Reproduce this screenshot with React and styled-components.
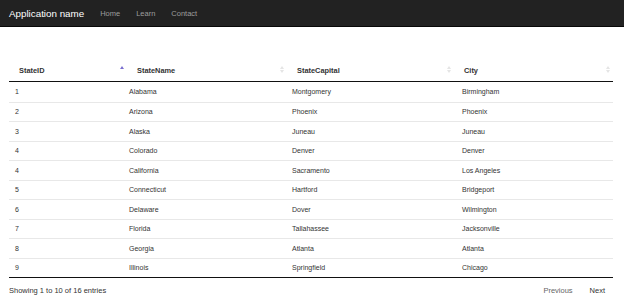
import React from "react";
import styled, { createGlobalStyle } from "styled-components";

const Global = createGlobalStyle`
  html, body { margin: 0; padding: 0; background: #fff; }
  body { font-family: "Liberation Sans", Arial, sans-serif; color: #333; }
`;

const Navbar = styled.nav`
  height: 27px;
  background: #222;
  border-bottom: 1px solid #080808;
  box-sizing: border-box;
  display: flex;
  align-items: center;
  padding-left: 9px;
  padding-top: 1px;
`;

const Brand = styled.span`
  color: #fff;
  font-size: 9.8px;
  margin-right: 16px;
`;

const NavLink = styled.span`
  color: #9d9d9d;
  font-size: 7.5px;
  margin-right: 16px;
`;

const Container = styled.div`
  padding: 32px 11px 0 9px;
`;

const HeadGrid = styled.div`
  display: grid;
  grid-template-columns: 118px 160px 167px 159px;
  border-bottom: 1px solid #111;
`;

const BodyGrid = styled.div`
  display: grid;
  grid-template-columns: 114px 163px 170px 157px;
  border-bottom: 1px solid #111;
`;

const HeadCell = styled.div`
  position: relative;
  height: 22px;
  box-sizing: border-box;
  display: flex;
  align-items: center;
  padding-left: 10px;
  padding-top: 1px;
  font-size: 7.4px;
  font-weight: bold;
  color: #333;
`;

const SortIcon = styled.span`
  position: absolute;
  right: 3px;
  top: 7px;
  display: flex;
  flex-direction: column;
  gap: 1px;
  opacity: ${(p) => (p.$active ? 1 : 0.25)};
`;

const Tri = styled.span`
  width: 0;
  height: 0;
  border-left: 2px solid transparent;
  border-right: 2px solid transparent;
  ${(p) =>
    p.$up
      ? `border-bottom: 3px solid ${p.$color};`
      : `border-top: 3px solid ${p.$color};`}
  visibility: ${(p) => (p.$hidden ? "hidden" : "visible")};
`;

const Cell = styled.div`
  height: 19.5px;
  box-sizing: border-box;
  border-top: ${(p) => (p.$first ? "none" : "1px solid #e8e8e8")};
  display: flex;
  align-items: center;
  padding-left: 6px;
  font-size: 7px;
  color: #333;
`;

const Footer = styled.div`
  display: flex;
  justify-content: space-between;
  align-items: center;
  height: 24px;
  font-size: 7.5px;
  color: #333;
`;

const Pager = styled.div`
  display: flex;
  gap: 17px;
  padding-right: 8px;
`;

const PageBtn = styled.span`
  color: ${(p) => (p.$disabled ? "#666" : "#333")};
`;

const rows = [
  ["1", "Alabama", "Montgomery", "Birmingham"],
  ["2", "Arizona", "Phoenix", "Phoenix"],
  ["3", "Alaska", "Juneau", "Juneau"],
  ["4", "Colorado", "Denver", "Denver"],
  ["4", "California", "Sacramento", "Los Angeles"],
  ["5", "Connecticut", "Hartford", "Bridgeport"],
  ["6", "Delaware", "Dover", "Wilmington"],
  ["7", "Florida", "Tallahassee", "Jacksonville"],
  ["8", "Georgia", "Atlanta", "Atlanta"],
  ["9", "Illinois", "Springfield", "Chicago"],
];

const heads = ["StateID", "StateName", "StateCapital", "City"];

export default function App() {
  return (
    <>
      <Global />
      <Navbar>
        <Brand>Application name</Brand>
        <NavLink>Home</NavLink>
        <NavLink>Learn</NavLink>
        <NavLink>Contact</NavLink>
      </Navbar>
      <Container>
        <HeadGrid>
          {heads.map((h, i) => (
            <HeadCell key={h}>
              {h}
              <SortIcon $active={i === 0}>
                <Tri $up $color={i === 0 ? "#7a6fd0" : "#999"} />
                <Tri $color="#999" $hidden={i === 0} />
              </SortIcon>
            </HeadCell>
          ))}
        </HeadGrid>
        <BodyGrid>
          {rows.map((r, ri) =>
            r.map((c, ci) => (
              <Cell key={ri + "-" + ci} $first={ri === 0}>
                {c}
              </Cell>
            ))
          )}
        </BodyGrid>
        <Footer>
          <span>Showing 1 to 10 of 16 entries</span>
          <Pager>
            <PageBtn $disabled>Previous</PageBtn>
            <PageBtn>Next</PageBtn>
          </Pager>
        </Footer>
      </Container>
    </>
  );
}
